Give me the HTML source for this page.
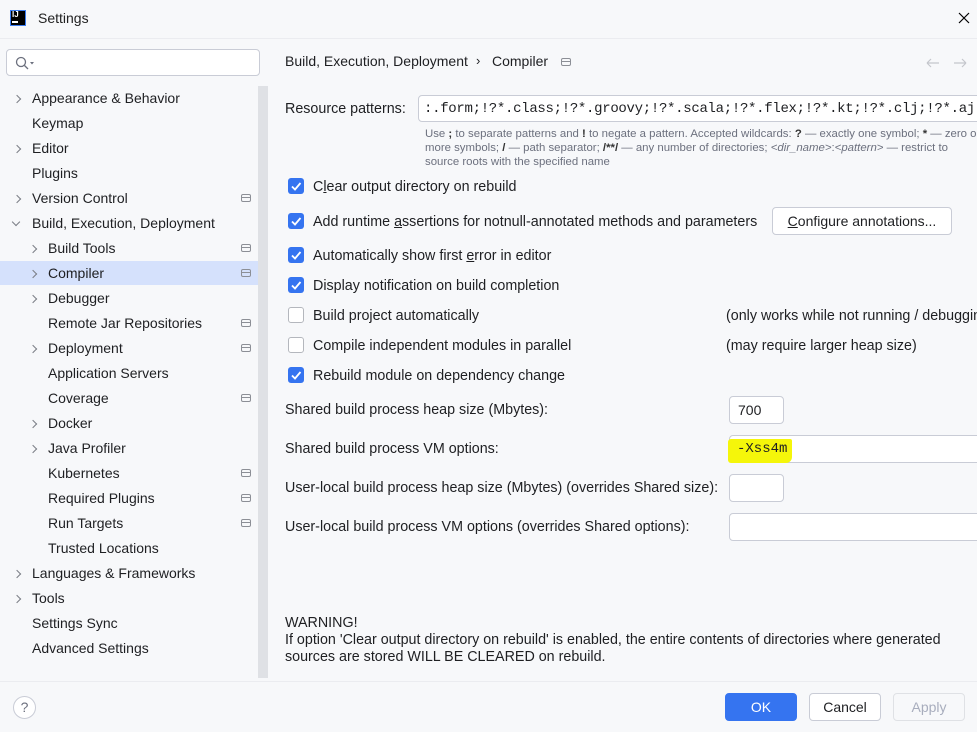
<!DOCTYPE html>
<html><head><meta charset="utf-8">
<style>
*{box-sizing:border-box;margin:0;padding:0}
body{width:977px;height:732px;overflow:hidden;background:#f7f8fa;font-family:"Liberation Sans",sans-serif;color:#1e1f22;position:relative}
.a{position:absolute;white-space:nowrap}
.s{font-size:14px}
.m{font-size:14.3px}
.arr{position:absolute;width:6px;height:6px;border-right:1.3px solid #7a7d85;border-top:1.3px solid #7a7d85;transform:rotate(45deg)}
.pg{position:absolute;width:10px;height:8px;border:1.2px solid #8c8f96;border-radius:2px}
.pg:after{content:"";position:absolute;left:0;right:0;top:1.5px;border-top:1.2px solid #8c8f96}
.cb{position:absolute;width:16px;height:16px;border-radius:3px;background:#3574f0}
.cb svg{position:absolute;left:2px;top:2px}
.ucb{position:absolute;width:16px;height:16px;border-radius:3px;border:1px solid #b4b7bd;background:#fff}
.in{position:absolute;background:#fff;border:1px solid #c9ccd6;border-radius:4px}
.btn{position:absolute;border:1px solid #c9ccd6;border-radius:4px;background:#fff;font-size:14px;text-align:center}
</style></head><body>
<div class="a" style="left:10px;top:10px;width:16px;height:16px;background:#000;border:1px solid #3b7cf0"></div>
<div class="a" style="left:12px;top:10px;color:#fff;font-size:8px;font-weight:bold">IJ</div>
<div class="a" style="left:12px;top:21px;width:6px;height:1.5px;background:#fff"></div>
<div class="a s" style="left:38px;top:10px;color:#222">Settings</div>
<svg class="a" style="left:958px;top:12px" width="12" height="12"><path d="M1 1L11 11M11 1L1 11" stroke="#000" stroke-width="1.2"/></svg>
<div class="a" style="left:0;top:38px;width:977px;height:1px;background:#ebecf0"></div>
<div class="in" style="left:6px;top:49px;width:254px;height:27px"></div>
<svg class="a" style="left:15px;top:56px" width="20" height="14"><circle cx="6" cy="6" r="4.5" fill="none" stroke="#6c707e" stroke-width="1.3"/><path d="M9.5 9.5L13 13" stroke="#6c707e" stroke-width="1.3"/><path d="M15 6h4l-2 2.5z" fill="#6c707e"/></svg>
<div class="a" style="left:0;top:261px;width:258px;height:24px;background:#d5e1fc"></div>
<div class="a" style="left:258px;top:86px;width:10px;height:592px;background:#dfe1e5"></div>
<div id="tree"></div>
<div class="a s" style="left:285px;top:53px">Build, Execution, Deployment</div>
<div class="a" style="left:476px;top:53px;font-size:13px">›</div>
<div class="a s" style="left:492px;top:53px">Compiler</div>
<div class="pg" style="left:561px;top:58px"></div>
<svg class="a" style="left:926px;top:57px" width="44" height="12"><path d="M1 6h12M1 6l4-4M1 6l4 4" stroke="#c4c6cc" stroke-width="1.2" fill="none"/><path d="M28 6h12M40 6l-4-4M40 6l-4 4" stroke="#c4c6cc" stroke-width="1.2" fill="none"/></svg>

<div class="a m" style="left:285px;top:101px">Resource patterns:</div>
<div class="in" style="left:418px;top:95px;width:570px;height:27px;overflow:hidden"><div class="a" style="left:5px;top:5px;font-family:'Liberation Mono',monospace;font-size:14px;letter-spacing:-0.3px">:.form;!?*.class;!?*.groovy;!?*.scala;!?*.flex;!?*.kt;!?*.clj;!?*.aj</div></div>
<div class="a" style="left:425px;top:127px;font-size:11.4px;color:#6c707e;line-height:14px">Use <b style="color:#333">;</b> to separate patterns and <b style="color:#333">!</b> to negate a pattern. Accepted wildcards: <b style="color:#333">?</b> — exactly one symbol; <b style="color:#333">*</b> — zero or<br>more symbols; <b style="color:#333">/</b> — path separator; <b style="color:#333">/**/</b> — any number of directories; <i>&lt;dir_name&gt;</i>:<i>&lt;pattern&gt;</i> — restrict to<br>source roots with the specified name</div>

<div id="cbs"></div>
<div class="btn" style="left:772px;top:207px;width:180px;height:28px;line-height:26px"><u>C</u>onfigure annotations...</div>
<div class="a m" style="left:726px;top:308px">(only works while not running / debugging)</div>
<div class="a m" style="left:726px;top:338px">(may require larger heap size)</div>

<div class="a m" style="left:285px;top:402px">Shared build process heap size (Mbytes):</div>
<div class="in" style="left:729px;top:396px;width:55px;height:28px"><div class="a" style="left:8px;top:5px;font-size:14px">700</div></div>
<div class="a m" style="left:285px;top:441px">Shared build process VM options:</div>
<div class="in" style="left:729px;top:435px;width:260px;height:28px"></div>
<div class="a" style="left:728px;top:439px;width:64px;height:24px;background:#f5f60a;border-radius:3px 2px 6px 3px"></div>
<div class="a" style="left:737px;top:441px;font-family:'Liberation Mono',monospace;font-size:14px">-Xss4m</div>
<div class="a m" style="left:285px;top:480px">User-local build process heap size (Mbytes) (overrides Shared size):</div>
<div class="in" style="left:729px;top:474px;width:55px;height:28px"></div>
<div class="a m" style="left:285px;top:519px">User-local build process VM options (overrides Shared options):</div>
<div class="in" style="left:729px;top:513px;width:260px;height:28px"></div>

<div class="a m" style="left:285px;top:615px;line-height:17px">WARNING!<br>If option 'Clear output directory on rebuild' is enabled, the entire contents of directories where generated<br>sources are stored WILL BE CLEARED on rebuild.</div>

<div class="a" style="left:0;top:681px;width:977px;height:1px;background:#ebecf0"></div>
<div class="a" style="left:13px;top:696px;width:23px;height:23px;border:1px solid #c9ccd6;border-radius:50%;background:#fff;text-align:center;font-size:14px;line-height:21px;color:#6c707e">?</div>
<div class="btn" style="left:725px;top:693px;width:72px;height:28px;line-height:26px;background:#3574f0;border-color:#3574f0;color:#fff">OK</div>
<div class="btn" style="left:809px;top:693px;width:72px;height:28px;line-height:26px">Cancel</div>
<div class="btn" style="left:893px;top:693px;width:72px;height:28px;line-height:26px;border-color:#dfe1e5;background:#f7f8fa;color:#a8adbd">Apply</div>

<script>
var t=[["Appearance & Behavior",0,1,0],["Keymap",0,0,0],["Editor",0,1,0],["Plugins",0,0,0],["Version Control",0,1,1],["Build, Execution, Deployment",0,2,0],["Build Tools",1,1,1],["Compiler",1,1,1],["Debugger",1,1,0],["Remote Jar Repositories",1,0,1],["Deployment",1,1,1],["Application Servers",1,0,0],["Coverage",1,0,1],["Docker",1,1,0],["Java Profiler",1,1,0],["Kubernetes",1,0,1],["Required Plugins",1,0,1],["Run Targets",1,0,1],["Trusted Locations",1,0,0],["Languages & Frameworks",0,1,0],["Tools",0,1,0],["Settings Sync",0,0,0],["Advanced Settings",0,0,0]];
var h="";
t.forEach(function(r,i){var y=98+i*25;var x=r[1]?48:32;
h+='<div class="a s" style="left:'+x+'px;top:'+(y-8)+'px">'+r[0].replace("&","&amp;")+'</div>';
if(r[2]==1)h+='<div class="arr" style="left:'+(x-18)+'px;top:'+(y-2)+'px"></div>';
if(r[2]==2)h+='<div class="arr" style="left:'+(x-19)+'px;top:'+(y-4)+'px;transform:rotate(135deg)"></div>';
if(r[3])h+='<div class="pg" style="left:241px;top:'+(y-4)+'px"></div>';});
document.getElementById("tree").innerHTML=h;
var c=[["C<u>l</u>ear output directory on rebuild",186,1],["Add runtime <u>a</u>ssertions for notnull-annotated methods and parameters",221,1],["Automatically show first <u>e</u>rror in editor",255,1],["Display notification on build completion",285,1],["Build project automatically",315,0],["Compile independent modules in parallel",345,0],["Rebuild module on dependency change",375,1]];
h="";
c.forEach(function(r){var y=r[1];
h+=r[2]?'<div class="cb" style="left:288px;top:'+(y-8)+'px"><svg width="12" height="12"><path d="M2 6.5L5 9.5L10.5 3" stroke="#fff" stroke-width="1.8" fill="none"/></svg></div>':'<div class="ucb" style="left:288px;top:'+(y-8)+'px"></div>';
h+='<div class="a m" style="left:313px;top:'+(y-7)+'px">'+r[0]+'</div>';});
document.getElementById("cbs").innerHTML=h;
</script>
</body></html>
